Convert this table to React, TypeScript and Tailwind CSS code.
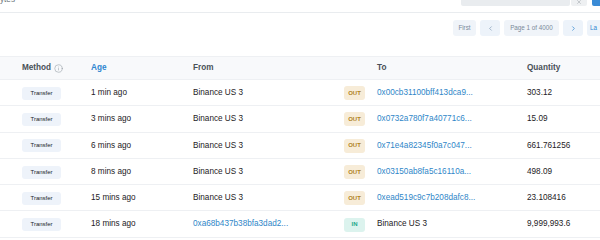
import React from 'react'
import { Info, ChevronLeft, ChevronRight, X } from 'lucide-react'

type Row = {
  age: string
  from: string
  fromLink?: boolean
  dir: 'OUT' | 'IN'
  to: string
  toLink?: boolean
  qty: string
}

const rows: Row[] = [
  { age: '1 min ago', from: 'Binance US 3', dir: 'OUT', to: '0x00cb31100bff413dca9...', toLink: true, qty: '303.12' },
  { age: '3 mins ago', from: 'Binance US 3', dir: 'OUT', to: '0x0732a780f7a40771c6...', toLink: true, qty: '15.09' },
  { age: '6 mins ago', from: 'Binance US 3', dir: 'OUT', to: '0x71e4a82345f0a7c047...', toLink: true, qty: '661.761256' },
  { age: '8 mins ago', from: 'Binance US 3', dir: 'OUT', to: '0x03150ab8fa5c16110a...', toLink: true, qty: '498.09' },
  { age: '15 mins ago', from: 'Binance US 3', dir: 'OUT', to: '0xead519c9c7b208dafc8...', toLink: true, qty: '23.108416' },
  { age: '18 mins ago', from: '0xa68b437b38bfa3dad2...', fromLink: true, dir: 'IN', to: 'Binance US 3', qty: '9,999,993.6' },
]

const cols = 'grid grid-cols-[69px_102px_151px_33px_150px_1fr] items-center pl-[22px]'

const DirBadge = ({ dir }: { dir: 'OUT' | 'IN' }) =>
  dir === 'OUT' ? (
    <span className="flex h-[14px] w-[21px] items-center justify-center rounded-[3px] bg-[#f7ecd8] text-[6px] font-bold text-[#b0831c]">OUT</span>
  ) : (
    <span className="flex h-[14px] w-[21px] items-center justify-center rounded-[3px] bg-[#dcf3ee] text-[6px] font-bold text-[#1ea88a]">IN</span>
  )

export default function App() {
  return (
    <div className="h-[240px] w-[600px] overflow-hidden bg-white text-[8.2px] text-[#1d2125]" style={{ fontFamily: '"Liberation Sans", Arial, sans-serif' }}>
      {/* top strip, cut off by the window */}
      <div className="flex h-[13px] items-start justify-between overflow-hidden border-b border-[#e9ecef]">
        <span className="-mt-[6px] text-[8.2px] text-[#6c757d]">ytes</span>
        <div className="flex items-start">
          <div className="h-[6px] w-[109px] rounded-b-[2px] bg-[#e9ecef]" />
          <div className="ml-px flex h-[6px] w-[16px] items-start justify-center rounded-b-[2px] bg-[#eef0f2]">
            <X size={6} className="-mt-[1px] text-[#9aa0a6]" />
          </div>
          <div className="ml-[5px] h-[6px] w-[8px] rounded-bl-[2px] bg-[#3a8bd6]" />
        </div>
      </div>

      {/* pagination */}
      <div className="flex h-[43px] items-start justify-end gap-[4px] pt-[7px] text-[6.3px] text-[#7b8a99]">
        <div className="flex h-[16px] w-[23px] items-center justify-center rounded-[3px] bg-[#f0f4f9]">First</div>
        <div className="flex h-[16px] w-[20px] items-center justify-center rounded-[3px] bg-[#edf3fa] text-[#6c8aa8]">
          <ChevronLeft size={7} strokeWidth={2} />
        </div>
        <div className="flex h-[16px] w-[55px] items-center justify-center rounded-[3px] bg-[#f0f4f9]">Page 1 of 4000</div>
        <div className="flex h-[16px] w-[20px] items-center justify-center rounded-[3px] bg-[#edf3fa] text-[#2f86d0]">
          <ChevronRight size={7} strokeWidth={2.5} />
        </div>
        <div className="flex h-[16px] w-[13px] items-center justify-start overflow-hidden rounded-l-[3px] bg-[#edf3fa] pl-[3px] text-[#2f86d0]">La</div>
      </div>

      {/* header */}
      <div className={`${cols} h-[24px] border-y border-[#eef0f3] bg-[#f8f9fb] pt-px font-bold text-[#495057]`}>
        <div className="flex items-center gap-[3px]">
          Method
          <Info size={9} strokeWidth={1.4} className="text-[#8c959e]" />
        </div>
        <div className="text-[#2f86d0]">Age</div>
        <div>From</div>
        <div />
        <div>To</div>
        <div>Quantity</div>
      </div>

      {rows.map((r, i) => (
        <div key={i} className={`${cols} h-[26.3px] border-b border-[#eef0f3] pt-px`}>
          <div>
            <span className="flex h-[13px] w-[39px] items-center justify-center rounded-[3px] bg-[#eef3fa] text-[6px] text-[#212529]">Transfer</span>
          </div>
          <div>{r.age}</div>
          <div className={r.fromLink ? 'text-[#2f86c8]' : ''}>{r.from}</div>
          <div>
            <DirBadge dir={r.dir} />
          </div>
          <div className={r.toLink ? 'text-[#2f86c8]' : ''}>{r.to}</div>
          <div>{r.qty}</div>
        </div>
      ))}
    </div>
  )
}
